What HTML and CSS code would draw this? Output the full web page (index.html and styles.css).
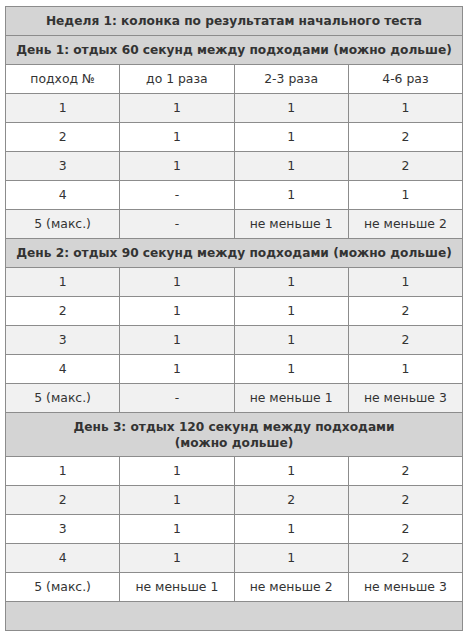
FILE: index.html
```html
<!DOCTYPE html>
<html lang="ru">
<head>
<meta charset="utf-8">
<link rel="stylesheet" href="styles.css">
</head>
<body>
<table class="plan">
  <colgroup><col class="c"><col class="c"><col class="c"><col class="c"></colgroup>
  <tr class="head"><td colspan="4">Неделя 1: колонка по результатам начального теста</td></tr>
  <tr class="head"><td colspan="4">День 1: отдых 60 секунд между подходами (можно дольше)</td></tr>
  <tr class="w"><td>подход №</td><td>до 1 раза</td><td>2-3 раза</td><td>4-6 раз</td></tr>
  <tr class="g"><td>1</td><td>1</td><td>1</td><td>1</td></tr>
  <tr class="w"><td>2</td><td>1</td><td>1</td><td>2</td></tr>
  <tr class="g"><td>3</td><td>1</td><td>1</td><td>2</td></tr>
  <tr class="w"><td>4</td><td>-</td><td>1</td><td>1</td></tr>
  <tr class="g"><td>5 (макс.)</td><td>-</td><td>не меньше 1</td><td>не меньше 2</td></tr>
  <tr class="head"><td colspan="4">День 2: отдых 90 секунд между подходами (можно дольше)</td></tr>
  <tr class="g"><td>1</td><td>1</td><td>1</td><td>1</td></tr>
  <tr class="w"><td>2</td><td>1</td><td>1</td><td>2</td></tr>
  <tr class="g"><td>3</td><td>1</td><td>1</td><td>2</td></tr>
  <tr class="w"><td>4</td><td>1</td><td>1</td><td>1</td></tr>
  <tr class="g"><td>5 (макс.)</td><td>-</td><td>не меньше 1</td><td>не меньше 3</td></tr>
  <tr class="head tall"><td colspan="4">День 3: отдых 120 секунд между подходами<br>(можно дольше)</td></tr>
  <tr class="w"><td>1</td><td>1</td><td>1</td><td>2</td></tr>
  <tr class="g"><td>2</td><td>1</td><td>2</td><td>2</td></tr>
  <tr class="w"><td>3</td><td>1</td><td>1</td><td>2</td></tr>
  <tr class="g"><td>4</td><td>1</td><td>1</td><td>2</td></tr>
  <tr class="w"><td>5 (макс.)</td><td>не меньше 1</td><td>не меньше 2</td><td>не меньше 3</td></tr>
  <tr class="head"><td colspan="4"></td></tr>
</table>
</body>
</html>
```
FILE: styles.css
```css
html, body {
  margin: 0;
  padding: 0;
  background: #ffffff;
}
body {
  padding: 6px 3px 0 5px;
  font-family: "DejaVu Sans", Verdana, sans-serif;
  font-size: 12.4px;
  color: #333333;
}
.plan {
  width: 458px;
  border-collapse: collapse;
  table-layout: fixed;
}
.plan .c {
  width: 25%;
}
.plan td {
  border: 1px solid #8c8c8c;
  height: 28px;
  padding: 0 3px;
  text-align: center;
  vertical-align: middle;
  line-height: 16px;
  white-space: nowrap;
}
.plan .head td {
  background: #d4d4d4;
  font-weight: bold;
  font-size: 12.2px;
}
.plan .tall td {
  height: 43px;
}
.plan .g td {
  background: #f1f1f1;
}
.plan .w td {
  background: #ffffff;
}
```
